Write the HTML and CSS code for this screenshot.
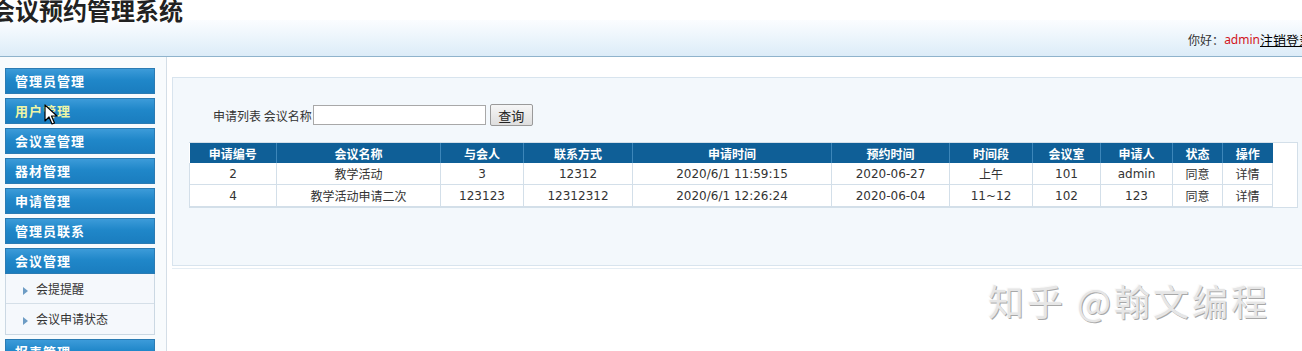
FILE: index.html
```html
<!DOCTYPE html>
<html lang="zh-CN">
    <head>
        <meta charset="UTF-8"><meta name="viewport" content="width=device-width, initial-scale=1.0"><title>会议预约管理系统</title>
        <link rel="stylesheet" href="styles.css">
    </head>
    <body>
        <h1 class="title">会议预约管理系统</h1>
        <div class="topbar">
            <span>你好：</span><span class="user">admin</span><a class="logout" href="#">注销登录</a>
        </div>
        <div class="wrap">
            <div class="side">
                <div class="menu">管理员管理</div>
                <div class="menu hover">用户管理</div>
                <div class="menu">会议室管理</div>
                <div class="menu">器材管理</div>
                <div class="menu">申请管理</div>
                <div class="menu">管理员联系</div>
                <div class="menu">会议管理</div>
                <div class="submenu">
                    <div class="subitem"><span class="arrow"></span>会提提醒</div>
                    <div class="subitem"><span class="arrow"></span>会议申请状态</div>
                </div>
                <div class="menu">报表管理</div>
            </div>
            <div class="main">
                <div class="panel">
                    <div class="search">
                        <span>申请列表 会议名称</span><input type="text" class="keyword"><button class="query">查询</button>
                    </div>
                    <div class="grid">
                        <table>
                            <colgroup>
                                <col style="width:87px"><col style="width:164px"><col style="width:83px"><col style="width:109px">
                                <col style="width:199px"><col style="width:118px"><col style="width:83px"><col style="width:68px">
                                <col style="width:72px"><col style="width:50px"><col style="width:50px">
                            </colgroup>
                            <tr>
                                <th>申请编号</th><th>会议名称</th><th>与会人</th><th>联系方式</th><th>申请时间</th><th>预约时间</th>
                                <th>时间段</th><th>会议室</th><th>申请人</th><th>状态</th><th>操作</th>
                            </tr>
                            <tr>
                                <td>2</td><td>教学活动</td><td>3</td><td>12312</td><td>2020/6/1 11:59:15</td><td>2020-06-27</td>
                                <td>上午</td><td>101</td><td>admin</td><td>同意</td><td>详情</td>
                            </tr>
                            <tr>
                                <td>4</td><td>教学活动申请二次</td><td>123123</td><td>12312312</td><td>2020/6/1 12:26:24</td><td>2020-06-04</td>
                                <td>11~12</td><td>102</td><td>123</td><td>同意</td><td>详情</td>
                            </tr>
                        </table>
                    </div>
                </div>
                <div class="footline"></div>
            </div>
        </div>
        <div class="mark">知乎 @翰文编程</div>
        <svg class="cursor" width="14" height="22" viewBox="0 0 14 22">
            <path d="M1 1 L1 17 L5 13 L8 20 L10.5 19 L7.5 12 L13 12 Z" fill="#fff" stroke="#000" stroke-width="1.2" stroke-linejoin="round"/>
        </svg>
    </body>
</html>
```

FILE: styles.css
```css
body {
    margin: 0;
    overflow: hidden;
    background: #fff;
    font-family: "DejaVu Sans", "Noto Sans CJK SC", sans-serif;
    font-size: 12px;
    color: #333;
}
.title {
    margin: 0 0 0 -9px;
    height: 20px;
    line-height: 20px;
    font-family: "Noto Sans CJK SC", sans-serif;
    font-size: 24px;
    font-weight: bold;
    color: #222;
    white-space: nowrap;
}
.topbar {
    height: 37px;
    box-sizing: border-box;
    border-bottom: 1px solid #8fb3cc;
    background: linear-gradient(#fbfdff, #dcecf8);
    display: flex;
    justify-content: flex-end;
    align-items: center;
    padding-top: 2px;
    margin-right: -10px;
    font-family: "Noto Sans CJK SC", sans-serif;
    font-size: 12px;
    color: #333;
    white-space: nowrap;
}
.user {
    color: #d2141c;
    font-family: "Noto Sans", sans-serif;
    font-size: 12px;
}
.logout {
    color: #000;
    text-decoration: underline;
    font-size: 13px;
}
.wrap {
    display: flex;
    height: 294px;
}
.side {
    width: 167px;
    flex: none;
    border-right: 1px solid #d4dee7;
    background: #f8fbfd;
    padding: 11px 0 0 5px;
    box-sizing: border-box;
}
.menu {
    width: 150px;
    height: 26px;
    box-sizing: border-box;
    margin-bottom: 4px;
    border: 1px solid #2b7bb3;
    background: linear-gradient(#3c9bd9, #2087c9 45%, #1a7dbf);
    color: #fff;
    font-family: "Noto Sans CJK SC", sans-serif;
    font-weight: bold;
    font-size: 13px;
    letter-spacing: 1px;
    line-height: 24px;
    padding-left: 9px;
}
.menu.hover {
    color: #eef5a6;
}
.submenu {
    width: 150px;
    box-sizing: border-box;
    margin-top: -4px;
    margin-bottom: 4px;
    border: 1px solid #cbd8e3;
    border-top: none;
    background: #f5f8fc;
}
.subitem {
    height: 30px;
    line-height: 30px;
    border-bottom: 1px solid #d5dfe8;
    font-family: "Noto Sans CJK SC", sans-serif;
    font-size: 12px;
    color: #333;
    padding-left: 17px;
    box-sizing: border-box;
}
.subitem:last-child {
    border-bottom: none;
}
.arrow {
    display: inline-block;
    width: 0;
    height: 0;
    border-top: 4px solid transparent;
    border-bottom: 4px solid transparent;
    border-left: 5px solid #6d9cc4;
    margin-right: 8px;
    vertical-align: -1px;
}
.main {
    flex: 1;
}
.panel {
    margin: 20px -4px 0 5px;
    height: 189px;
    box-sizing: border-box;
    border: 1px solid #d8e4ee;
    background: #f3f8fc;
    padding: 26px 0 0 16px;
}
.search {
    padding-left: 24px;
    height: 22px;
    display: flex;
    align-items: center;
    font-family: "Noto Sans CJK SC", sans-serif;
    font-size: 12px;
    color: #333;
}
.keyword {
    width: 173px;
    height: 20px;
    box-sizing: border-box;
    border: 1px solid #a8a8a8;
    margin: 0 4px 0 1px;
    padding: 0;
}
.query {
    width: 43px;
    height: 22px;
    border: 1px solid #9a9a9a;
    border-radius: 2px;
    background: linear-gradient(#f6f6f6, #dedede);
    font-family: "Noto Sans CJK SC", sans-serif;
    font-size: 13px;
    color: #222;
    padding: 0;
}
.grid {
    margin-top: 16px;
    width: 1108px;
    border: 1px solid #d3dfe9;
    border-left: none;
    background: #fff;
}
.grid table {
    border-collapse: collapse;
    table-layout: fixed;
    width: 1083px;
}
.grid th {
    height: 20px;
    padding: 0;
    background: #0f5f97;
    color: #fff;
    font-family: "Noto Sans CJK SC", sans-serif;
    font-size: 12px;
    font-weight: bold;
    border-left: 1px solid #3d86b9;
}
.grid th:first-child {
    border-left: none;
}
.grid td {
    height: 21px;
    padding: 0;
    text-align: center;
    border: 1px solid #d3dfe9;
    border-top: none;
    color: #333;
    white-space: nowrap;
}
.footline {
    margin: 2px 0 0 5px;
    border-top: 1px solid #e4edf4;
}
.mark {
    position: absolute;
    left: 988px;
    top: 274px;
    font-family: "Noto Sans CJK SC", sans-serif;
    font-size: 36px;
    letter-spacing: 3px;
    color: #e6e6e6;
    text-shadow: 1px 1px 0 #a8a8a8, -1px -1px 0 #fafafa;
}
.cursor {
    position: absolute;
    left: 44px;
    top: 104px;
}
```
